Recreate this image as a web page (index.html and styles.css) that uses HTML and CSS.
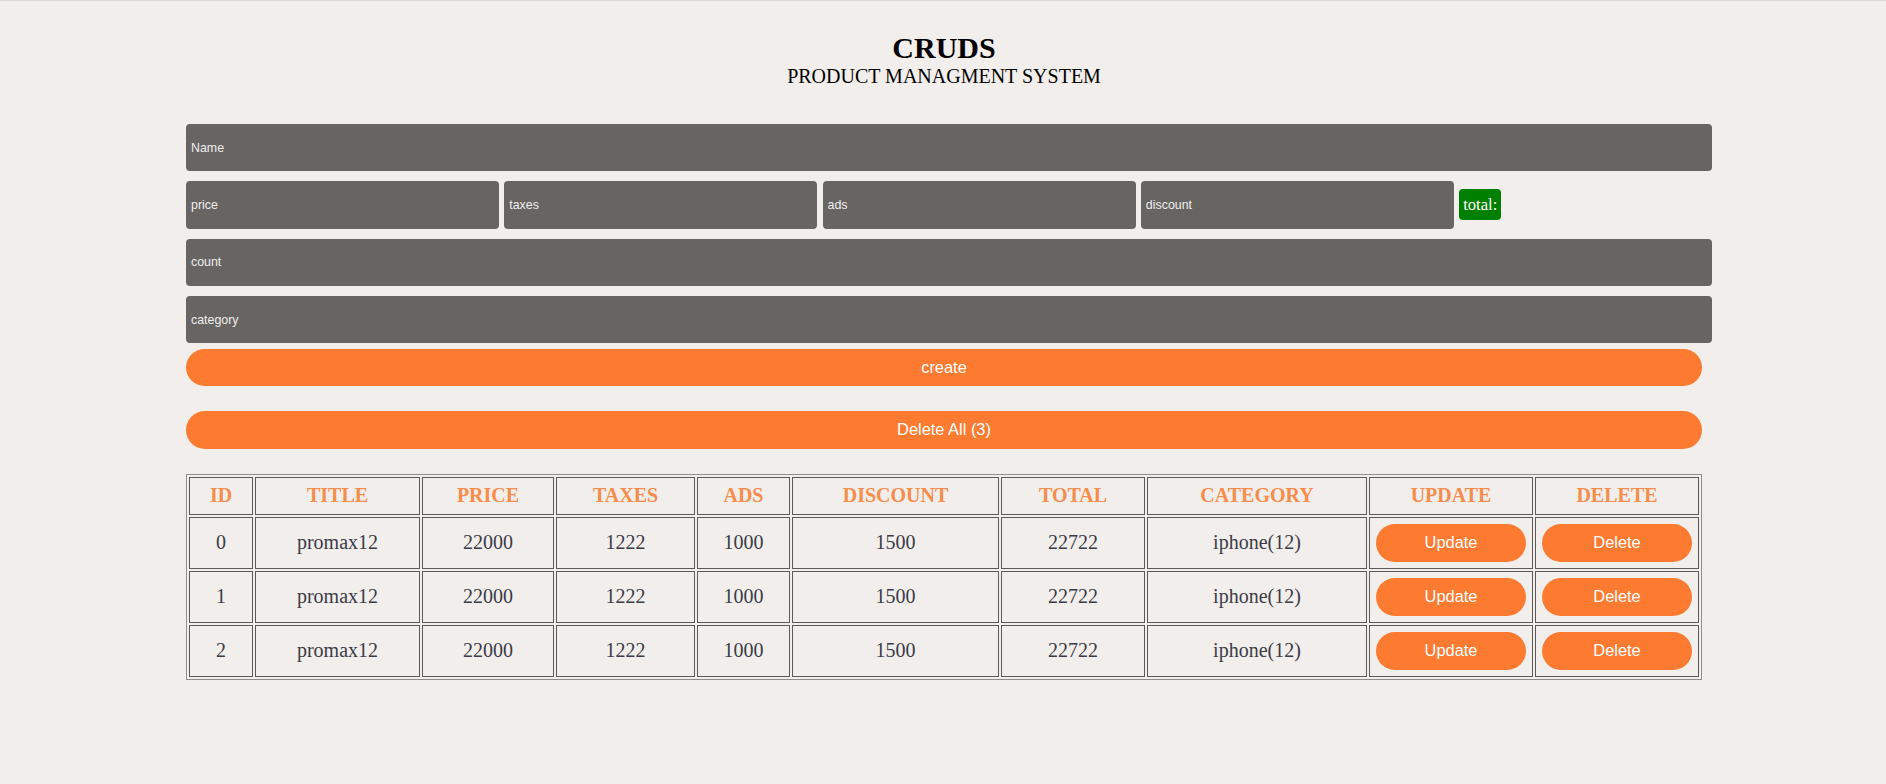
FILE: index.html
```html
<!DOCTYPE html>
<html lang="en">
<head>
<meta charset="utf-8">
<title>CRUDS</title>
<link rel="stylesheet" href="styles.css">
</head>
<body>
<div class="crud">
  <div class="head">
    <h2>CRUDS</h2>
    <p>PRODUCT MANAGMENT SYSTEM</p>
  </div>
  <div class="inputs">
    <input class="field" type="text" placeholder="Name">
    <div class="price-row">
      <input class="field small" type="number" placeholder="price">
      <input class="field small" type="number" placeholder="taxes">
      <input class="field small" type="number" placeholder="ads">
      <input class="field small" type="number" placeholder="discount">
      <small class="total">total:</small>
    </div>
    <input class="field" type="number" placeholder="count">
    <input class="field field-last" type="text" placeholder="category">
    <button class="btn">create</button>
  </div>
  <div class="delete-all">
    <button class="btn">Delete All (3)</button>
  </div>
  <table class="products">
    <thead>
      <tr>
        <th class="c-id">ID</th>
        <th class="c-title">TITLE</th>
        <th class="c-price">PRICE</th>
        <th class="c-taxes">TAXES</th>
        <th class="c-ads">ADS</th>
        <th class="c-discount">DISCOUNT</th>
        <th class="c-total">TOTAL</th>
        <th class="c-category">CATEGORY</th>
        <th class="c-update">UPDATE</th>
        <th class="c-delete">DELETE</th>
      </tr>
    </thead>
    <tbody>
      <tr>
        <td>0</td><td>promax12</td><td>22000</td><td>1222</td><td>1000</td><td>1500</td><td>22722</td><td>iphone(12)</td>
        <td class="cell-btn"><button class="btn btn-row">Update</button></td>
        <td class="cell-btn"><button class="btn btn-row">Delete</button></td>
      </tr>
      <tr>
        <td>1</td><td>promax12</td><td>22000</td><td>1222</td><td>1000</td><td>1500</td><td>22722</td><td>iphone(12)</td>
        <td class="cell-btn"><button class="btn btn-row">Update</button></td>
        <td class="cell-btn"><button class="btn btn-row">Delete</button></td>
      </tr>
      <tr>
        <td>2</td><td>promax12</td><td>22000</td><td>1222</td><td>1000</td><td>1500</td><td>22722</td><td>iphone(12)</td>
        <td class="cell-btn"><button class="btn btn-row">Update</button></td>
        <td class="cell-btn"><button class="btn btn-row">Delete</button></td>
      </tr>
    </tbody>
  </table>
</div>
</body>
</html>
```
FILE: styles.css
```css
html, body {
  margin: 0;
  padding: 0;
}

body {
  background: #f1eeeb;
  border-top: 1px solid #dadada;
  font-family: "Liberation Serif", "Times New Roman", serif;
  font-size: 20px;
  color: #000;
}

.crud {
  width: 1516px;
  margin-left: 186px;
}

.head {
  text-align: center;
  padding-top: 30px;
}

.head h2 {
  margin: 0;
  font-size: 30px;
  line-height: 34px;
  font-weight: bold;
}

.head p {
  margin: 0;
  font-size: 20px;
  line-height: 22px;
}

.inputs {
  margin-top: 37px;
}

.field {
  display: block;
  box-sizing: border-box;
  width: 1526px;
  height: 47.3px;
  margin: 0 0 10px;
  padding: 0 5px;
  border: none;
  border-radius: 4px;
  background: #686462;
  color: #fff;
  font-family: "Liberation Sans", Arial, sans-serif;
  font-size: 12.4px;
  outline: none;
}

.field::placeholder {
  color: #eeeeee;
  opacity: 1;
}

.field::-webkit-outer-spin-button,
.field::-webkit-inner-spin-button {
  -webkit-appearance: none;
  margin: 0;
}

.field[type=number] {
  -moz-appearance: textfield;
}

.field-last {
  margin-bottom: 5.4px;
}

.price-row {
  display: flex;
  align-items: center;
  gap: 5.1px;
  margin-bottom: 10px;
}

.price-row .small {
  width: 313.2px;
  margin: 0;
  flex: none;
}

.total {
  background: #008000;
  color: #ffffff;
  font-size: 16.67px;
  line-height: 19px;
  padding: 6px 4px;
  border-radius: 4px;
}

.btn {
  display: block;
  width: 100%;
  height: 37.5px;
  padding: 0;
  border: none;
  border-radius: 20px;
  background: #fd7a31;
  color: #ffffff;
  font-family: "Liberation Sans", Arial, sans-serif;
  font-size: 16.4px;
  cursor: pointer;
}

.delete-all {
  margin: 25px 0;
}

.products {
  width: 100%;
  table-layout: fixed;
  border: 1px solid #8f8c8a;
  border-spacing: 2px;
}

.products th,
.products td {
  box-sizing: border-box;
  border: 1px solid #5d5957;
  text-align: center;
  font-size: 20px;
}

.products th {
  color: #f78c4b;
  font-weight: bold;
  padding: 6.5px 1px;
}

.products td {
  color: #3b3b47;
  padding: 6px;
}

.btn-row {
  height: 38px;
}

.c-id { width: 64px; }
.c-title { width: 165px; }
.c-price { width: 132px; }
.c-taxes { width: 139px; }
.c-ads { width: 93px; }
.c-discount { width: 207px; }
.c-total { width: 144px; }
.c-category { width: 220px; }
.c-update { width: 164px; }
.c-delete { width: 164px; }
```
